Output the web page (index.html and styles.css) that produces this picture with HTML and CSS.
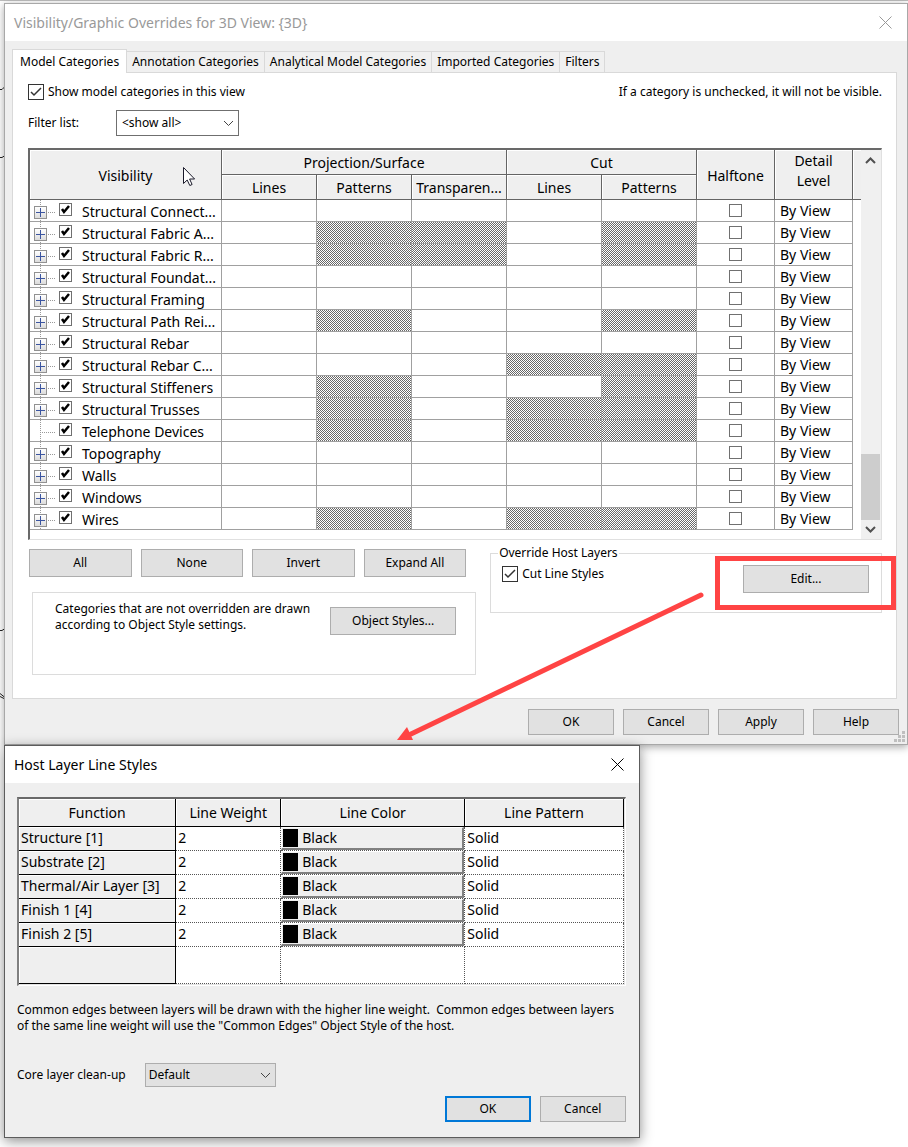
FILE: index.html
```html
<!DOCTYPE html>
<html lang="en">

<head>
    <meta charset="UTF-8">
    <meta name="viewport" content="width=device-width, initial-scale=1.0">
    <title>Visibility/Graphic Overrides</title>
    <link rel="stylesheet" href="styles.css">
</head>

<body>

    <div class="page">

        <!-- drawing lines left visible at the edge of the dialog -->
        <svg class="model-lines" width="5" height="745" aria-hidden="true">
            <path d="M0 88.5h2l3-3M0 156.5h2l3-2M0 629.5h2l3-2M0 692.5l5 4M0 695.5l4 2" fill="none" stroke="#222"/>
            <path d="M4.5 639v50" fill="none" stroke="#555" stroke-dasharray="1 7"/>
        </svg>

        <section class="dialog main-dialog">
            <header class="title-bar inactive">
                <h1>Visibility/Graphic Overrides for 3D View: {3D}</h1>
                <button type="button" class="close" aria-label="Close">
                    <svg width="13" height="13" viewBox="0 0 13 13"><path d="M.5 .5l12 12M12.5 .5l-12 12" stroke="currentColor"/></svg>
                </button>
            </header>

            <div class="main-body">
                <nav class="tabs">
                    <button type="button" class="tab active">Model Categories</button>
                    <button type="button" class="tab">Annotation Categories</button>
                    <button type="button" class="tab">Analytical Model Categories</button>
                    <button type="button" class="tab">Imported Categories</button>
                    <button type="button" class="tab">Filters</button>
                </nav>

                <div class="panel">
                    <div class="top-row">
                        <label class="check"><input type="checkbox" class="box" checked>Show model categories in this view</label>
                        <span>If a category is unchecked, it will not be visible.</span>
                    </div>
                    <div class="filter-row">
                        <label for="filterList">Filter list:</label>
                        <select id="filterList" class="filter-select">
                            <option>&lt;show all&gt;</option>
                        </select>
                    </div>

                    <div class="grid-box">
                        <div class="grid-area">
                            <table class="categories">
                                <colgroup>
                                    <col class="col-name">
                                    <col><col><col><col><col>
                                    <col class="col-small"><col class="col-small">
                                    <col class="col-gap">
                                </colgroup>
                                <thead>
                                    <tr>
                                        <th rowspan="2" class="name-head">Visibility</th>
                                        <th colspan="3">Projection/Surface</th>
                                        <th colspan="2">Cut</th>
                                        <th rowspan="2">Halftone</th>
                                        <th rowspan="2" class="detail-head">Detail Level</th>
                                        <th rowspan="2" class="gap-head"></th>
                                    </tr>
                                    <tr>
                                        <th>Lines</th>
                                        <th>Patterns</th>
                                        <th>Transparen...</th>
                                        <th>Lines</th>
                                        <th>Patterns</th>
                                    </tr>
                                </thead>
                                <tbody id="categoryRows"></tbody>
                            </table>
                        </div>
                        <div class="scrollbar">
                            <svg class="scroll-arrow" width="19" height="20" viewBox="0 0 19 20"><path d="M5 13l4.500-4.500 4.500 4.500" fill="none" stroke="#505050" stroke-width="2"/></svg>
                            <div class="scroll-track"><div class="scroll-thumb"></div></div>
                            <svg class="scroll-arrow" width="19" height="19" viewBox="0 0 19 19"><path d="M5 7l4.500 4.500 4.500-4.500" fill="none" stroke="#505050" stroke-width="2"/></svg>
                        </div>
                        <svg class="cursor" width="13" height="20" viewBox="0 0 13 20"><path d="M.5 .5v16l3.700-3.500 2.600 5.500 2.300-1-2.500-5.500h5z" fill="#fff" stroke="#1a1a2a"/></svg>
                    </div>

                    <div class="lower">
                        <div class="lower-left">
                            <div class="button-row">
                                <button type="button" class="btn">All</button>
                                <button type="button" class="btn">None</button>
                                <button type="button" class="btn">Invert</button>
                                <button type="button" class="btn">Expand All</button>
                            </div>
                            <div class="styles-box">
                                <p>Categories that are not overridden are drawn according to Object Style settings.</p>
                                <button type="button" class="btn wide">Object Styles...</button>
                            </div>
                        </div>
                        <fieldset class="host-layers">
                            <legend>Override Host Layers</legend>
                            <div class="host-row">
                                <label class="check"><input type="checkbox" class="box" checked>Cut Line Styles</label>
                                <span class="edit-wrap"><button type="button" class="btn wide">Edit...</button></span>
                            </div>
                        </fieldset>
                    </div>
                </div>

                <div class="actions">
                    <button type="button" class="btn">OK</button>
                    <button type="button" class="btn">Cancel</button>
                    <button type="button" class="btn">Apply</button>
                    <button type="button" class="btn">Help</button>
                </div>
            </div>
            <svg class="grip" width="11" height="11" viewBox="0 0 11 11"><path d="M8 0h3v3h-3zM4 4h3v3h-3zM8 4h3v3h-3zM0 8h3v3h-3zM4 8h3v3h-3zM8 8h3v3h-3z" fill="#bfbfbf"/></svg>
        </section>

        <section class="dialog host-dialog">
            <header class="title-bar">
                <h2>Host Layer Line Styles</h2>
                <button type="button" class="close" aria-label="Close">
                    <svg width="13" height="13" viewBox="0 0 13 13"><path d="M.5 .5l12 12M12.5 .5l-12 12" stroke="currentColor"/></svg>
                </button>
            </header>

            <div class="host-body">
                <div class="layers-box">
                    <table class="layers">
                        <colgroup>
                            <col class="col-function"><col class="col-weight"><col class="col-color"><col>
                        </colgroup>
                        <thead>
                            <tr>
                                <th>Function</th>
                                <th>Line Weight</th>
                                <th>Line Color</th>
                                <th>Line Pattern</th>
                            </tr>
                        </thead>
                        <tbody>
                            <tr>
                                <th>Structure [1]</th>
                                <td>2</td>
                                <td class="color-cell"><button type="button" class="color-btn">Black</button></td>
                                <td>Solid</td>
                            </tr>
                            <tr>
                                <th>Substrate [2]</th>
                                <td>2</td>
                                <td class="color-cell"><button type="button" class="color-btn">Black</button></td>
                                <td>Solid</td>
                            </tr>
                            <tr>
                                <th>Thermal/Air Layer [3]</th>
                                <td>2</td>
                                <td class="color-cell"><button type="button" class="color-btn">Black</button></td>
                                <td>Solid</td>
                            </tr>
                            <tr>
                                <th>Finish 1 [4]</th>
                                <td>2</td>
                                <td class="color-cell"><button type="button" class="color-btn">Black</button></td>
                                <td>Solid</td>
                            </tr>
                            <tr>
                                <th>Finish 2 [5]</th>
                                <td>2</td>
                                <td class="color-cell"><button type="button" class="color-btn">Black</button></td>
                                <td>Solid</td>
                            </tr>
                            <tr class="empty">
                                <th></th>
                                <td></td>
                                <td></td>
                                <td></td>
                            </tr>
                        </tbody>
                    </table>
                </div>

                <p class="note">Common edges between layers will be drawn with the higher line weight.&nbsp; Common edges between layers<br>of the same line weight will use the "Common Edges" Object Style of the host.</p>

                <div class="cleanup">
                    <label for="cleanup">Core layer clean-up</label>
                    <select id="cleanup" class="cleanup-select">
                        <option>Default</option>
                    </select>
                </div>

                <div class="actions">
                    <button type="button" class="btn default">OK</button>
                    <button type="button" class="btn">Cancel</button>
                </div>
            </div>
        </section>

        <!-- arrow from the Edit button to the dialog it opens -->
        <svg class="arrow" width="308" height="152" viewBox="0 0 308 152" aria-hidden="true">
            <path d="M304 4L14 143" stroke="#ff4444" stroke-width="5" stroke-linecap="round"/>
            <path d="M0 149l10-13 6 13z" fill="#ff4444"/>
        </svg>

    </div>

    <script>
        // 1 = hatched cell, in order: lines, patterns, transparency, cut lines, cut patterns
        const categories = [
            ["Structural Connect...", "00000"],
            ["Structural Fabric A...", "01101"],
            ["Structural Fabric R...", "01101"],
            ["Structural Foundat...", "00000"],
            ["Structural Framing", "00000"],
            ["Structural Path Rei...", "01001"],
            ["Structural Rebar", "00000"],
            ["Structural Rebar C...", "00011"],
            ["Structural Stiffeners", "01001"],
            ["Structural Trusses", "01011"],
            ["Telephone Devices", "01011", true],
            ["Topography", "00000"],
            ["Walls", "00000"],
            ["Windows", "00000"],
            ["Wires", "01011"]
        ];

        const rows = document.getElementById('categoryRows');

        categories.forEach(([name, cells, leaf]) => {
            const expand = leaf ? '' : `<button type="button" class="expand" aria-label="Expand ${name}"></button>`;
            const hatch = cells.split('').map(c => c === '1' ? '<td class="hatch"></td>' : '<td></td>').join('');
            const row = document.createElement('tr');
            row.innerHTML = `
                <td><div class="tree"><span class="branch">${expand}</span>
                <label><input type="checkbox" class="mark" checked><span>${name}</span></label></div></td>
                ${hatch}
                <td class="half"><input type="checkbox" class="mark" aria-label="Halftone ${name}"></td>
                <td class="detail">By View</td>
                <td class="gap"></td>`;
            rows.appendChild(row);
        });
    </script>

</body>

</html>
```
FILE: styles.css
```css
* {
    box-sizing: border-box;
}

body {
    margin: 0;
    background: #fff;
    color: #000;
    font-family: "Noto Sans", sans-serif;
    font-size: 12px;
    line-height: 16px;
}

h1, h2, p {
    margin: 0;
}

button, select, input {
    font: inherit;
    color: inherit;
    margin: 0;
}

.page {
    position: relative;
    padding: 2px 0 9px 4px;
    border-top: 1px solid #bdbdbd;
}

.model-lines {
    position: absolute;
    top: 0;
    left: 0;
}

/* dialogs */

.dialog {
    position: relative;
    background: #efefef;
    border: 1px solid #a8a8a8;
    box-shadow: 0 2px 8px rgba(0, 0, 0, 0.35);
}

.host-dialog {
    width: calc(70% + 3px);
    border-color: #5c5c5c;
    box-shadow: 0 3px 12px rgba(0, 0, 0, 0.45);
}

.title-bar {
    display: flex;
    align-items: center;
    justify-content: space-between;
    height: 37px;
    padding: 0 15px 0 9px;
    background: #fff;
}

.title-bar h1, .title-bar h2 {
    font-size: 14px;
    line-height: 20px;
    font-weight: normal;
}

.title-bar.inactive {
    color: #999;
}

.close {
    display: flex;
    padding: 0;
    border: none;
    background: none;
}

.main-body {
    padding: 8px 8px 8px 7px;
}

/* tabs */

.tabs {
    display: flex;
    align-items: flex-end;
    height: 23px;
}

.tab {
    height: 21px;
    padding: 0 5px;
    border: 1px solid #d9d9d9;
    border-width: 1px 1px 0 0;
    background: #f0f0f0;
}

.tab.active {
    position: relative;
    height: 24px;
    margin-bottom: -1px;
    padding: 0 7px;
    border-left-width: 1px;
    background: #fff;
}

.panel {
    margin-right: 2px;
    padding: 11px 14px 23px 15px;
    border: 1px solid #d9d9d9;
    background: #fff;
}

.top-row {
    display: flex;
    justify-content: space-between;
}

.check {
    display: flex;
    align-items: center;
    gap: 4px;
}

/* checkboxes */

.box {
    appearance: none;
    width: 16px;
    height: 16px;
    border: 1px solid #333;
    background: #fff;
}

.box:checked {
    background: #fff url("data:image/svg+xml,%3Csvg xmlns='http://www.w3.org/2000/svg' width='14' height='14'%3E%3Cpath d='M2 7l3 3 7-7' fill='none' stroke='%23333' stroke-width='1.500'/%3E%3C/svg%3E") center no-repeat;
}

.mark {
    appearance: none;
    width: 13px;
    height: 13px;
    border: 1px solid #707070;
    background: #fff;
}

.mark:checked {
    background: #fff url("data:image/svg+xml,%3Csvg xmlns='http://www.w3.org/2000/svg' width='11' height='11'%3E%3Cpath d='M2 5l2 3 5-6' fill='none' stroke='%23000' stroke-width='2.500'/%3E%3C/svg%3E") center no-repeat;
}

/* drop-downs */

select {
    appearance: none;
    border-radius: 0;
    background: #fff url("data:image/svg+xml,%3Csvg xmlns='http://www.w3.org/2000/svg' width='11' height='7'%3E%3Cpath d='M1 1l4.500 4.500 4.500-4.500' fill='none' stroke='%23444'/%3E%3C/svg%3E") right 4px center no-repeat;
}

.filter-row {
    display: flex;
    align-items: center;
    margin-top: 10px;
}

.filter-row label {
    width: 88px;
}

.filter-select {
    width: 123px;
    height: 26px;
    padding: 0 5px;
    border: 1px solid #6f6f6f;
}

/* category grid */

.grid-box {
    position: relative;
    display: flex;
    height: 392px;
    margin-top: 12px;
    border: 1px solid #e0e0e0;
    border-top: 2px solid #696969;
    border-left: 2px solid #696969;
}

.grid-area {
    flex: 1;
}

.categories {
    width: 100%;
    table-layout: fixed;
    border-collapse: separate;
    border-spacing: 0;
    font-size: 14px;
    line-height: 20px;
}

.col-name {
    width: 192px;
}

.col-small {
    width: 78px;
}

.col-gap {
    width: 8px;
}

.categories th {
    height: 25px;
    padding: 2px 0 0;
    border-right: 1px solid #646464;
    border-bottom: 1px solid #646464;
    background: #efefef;
    box-shadow: inset 1px 1px #fff;
    font-weight: normal;
}

.categories .detail-head {
    padding: 0 12px 8px;
}

.categories .gap-head {
    border-right: none;
}

.categories td {
    height: 22px;
    padding: 0;
    border-right: 1px solid #a0a0a0;
    border-bottom: 1px solid #a0a0a0;
    white-space: nowrap;
}

.categories td.hatch {
    background: repeating-conic-gradient(#686868 0 25%, #fff 0 50%) 0 0 / 2px 2px;
}

.categories td.gap {
    border: none;
}

.categories td.detail {
    padding: 1px 0 0 5px;
}

.categories td.half {
    text-align: center;
    line-height: 0;
}

.tree {
    display: flex;
    height: 21px;
    padding-left: 4px;
}

.tree label {
    display: flex;
    gap: 10px;
}

.tree label span {
    line-height: 24px;
    height: 21px;
}

.tree .mark {
    margin-top: 3px;
}

.branch {
    width: 25px;
    padding-top: 6px;
    background:
        repeating-linear-gradient(#999 0 1px, transparent 1px 2px) 6px 0 / 1px 100% no-repeat,
        repeating-linear-gradient(90deg, #999 0 1px, transparent 1px 2px) 6px 12px / 15px 1px no-repeat;
}

.expand {
    display: block;
    width: 13px;
    height: 13px;
    padding: 0;
    border: 1px solid #919191;
    background:
        linear-gradient(#3b55a0, #3b55a0) center / 9px 1px no-repeat,
        linear-gradient(#3b55a0, #3b55a0) center / 1px 9px no-repeat,
        linear-gradient(#fff, #dcdcdc);
}

.scrollbar {
    display: flex;
    flex-direction: column;
    width: 20px;
    padding-right: 1px;
    background: #f0f0f0;
}

.scroll-track {
    display: flex;
    flex: 1;
    align-items: flex-end;
}

.scroll-thumb {
    width: 100%;
    height: 19%;
    background: #cdcdcd;
}

.cursor {
    position: absolute;
    top: 17px;
    left: 153px;
}

/* lower controls */

.btn {
    height: 26px;
    padding: 0;
    border: 1px solid #adadad;
    background: #e1e1e1;
}

.lower {
    display: grid;
    grid-template-columns: 446fr 390fr;
    gap: 14px;
    margin-top: 9px;
}

.button-row {
    display: flex;
    gap: 9px;
    padding: 0 10px 0 1px;
}

.button-row .btn {
    flex: 1;
    height: 28px;
}

.btn.wide {
    width: 126px;
    height: 28px;
}

.styles-box {
    display: flex;
    align-items: flex-start;
    justify-content: space-between;
    height: 83px;
    margin: 15px 0 0 4px;
    padding: 8px 19px 0 22px;
    border: 1px solid #dcdcdc;
}

.styles-box p {
    width: 266px;
}

.styles-box .btn {
    margin-top: 6px;
}

.host-layers {
    height: 68px;
    min-width: 0;
    margin: -4px 0 0;
    padding: 0 12px 0 11px;
    border: 1px solid #dcdcdc;
}

.host-layers legend {
    margin-left: -4px;
    padding: 0 1px;
}

.host-row {
    display: flex;
    align-items: flex-start;
    justify-content: space-between;
}

.host-row .check {
    margin-top: 5px;
}

.edit-wrap {
    position: relative;
    margin-top: 4px;
}

.edit-wrap .btn {
    display: block;
}

/* red highlight around the Edit button */
.edit-wrap::after {
    content: "";
    position: absolute;
    inset: -9px -27px -17px -28px;
    border: 5px solid #ff4444;
    pointer-events: none;
}

.actions {
    display: flex;
    justify-content: flex-end;
    gap: 9px;
}

.actions .btn {
    width: 86px;
}

.main-body .actions {
    margin-top: 10px;
    padding-bottom: 1px;
}

.grip {
    position: absolute;
    right: 2px;
    bottom: 2px;
}

.arrow {
    position: absolute;
    top: 590px;
    left: 397px;
    pointer-events: none;
}

/* host layer dialog */

.host-body {
    padding: 14px 13px 15px 12px;
}

.layers-box {
    padding: 0 1px 1px 0;
    border: 1px solid #fff;
    border-top: 2px solid #696969;
    border-left: 2px solid #808080;
    background: #e3e3e3;
}

.layers {
    width: 100%;
    table-layout: fixed;
    border-collapse: separate;
    border-spacing: 0;
    background: #fff;
    font-size: 14px;
    line-height: 20px;
}

.col-function {
    width: 26%;
}

.col-weight {
    width: 105px;
}

.col-color {
    width: 184px;
}

.layers th {
    height: 24px;
    padding: 0 0 1px 2px;
    border-right: 1px solid #000;
    border-bottom: 1px solid #000;
    background: #efefef;
    box-shadow: inset 1px 1px #fff;
    font-weight: normal;
    text-align: left;
}

.layers thead th {
    height: 28px;
    padding: 0;
    text-align: center;
}

.layers td {
    height: 24px;
    padding: 0 0 1px 2px;
    border-right: 1px dotted #555;
    border-bottom: 1px dotted #555;
}

.layers td.color-cell {
    padding: 0;
}

.layers .empty th, .layers .empty td {
    height: 37px;
}

.color-btn {
    display: flex;
    align-items: center;
    gap: 4px;
    width: 100%;
    height: 23px;
    padding: 0 0 0 1px;
    border: 1px solid #fff;
    border-right: 2px solid #808080;
    border-bottom: 2px solid #808080;
    background: #efefef;
}

.color-btn::before {
    content: "";
    width: 15px;
    height: 18px;
    background: #000;
}

.note {
    margin-top: 16px;
    white-space: nowrap;
}

.cleanup {
    display: flex;
    align-items: center;
    gap: 19px;
    margin-top: 29px;
}

.cleanup-select {
    width: 131px;
    height: 24px;
    padding: 0 3px;
    border: 1px solid #adadad;
    background-color: #e1e1e1;
}

.host-body .actions {
    margin-top: 9px;
}

.btn.default {
    border: 2px solid #0078d7;
}
```
